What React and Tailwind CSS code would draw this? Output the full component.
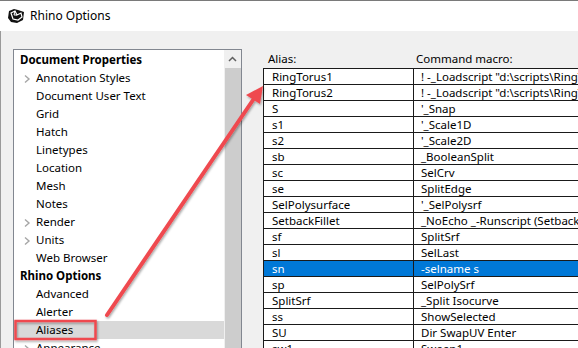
import React from "react";

const tree = [
  { label: "Document Properties", bold: true },
  { label: "Annotation Styles", arrow: true },
  { label: "Document User Text" },
  { label: "Grid" },
  { label: "Hatch" },
  { label: "Linetypes" },
  { label: "Location" },
  { label: "Mesh" },
  { label: "Notes" },
  { label: "Render", arrow: true },
  { label: "Units", arrow: true },
  { label: "Web Browser" },
  { label: "Rhino Options", bold: true },
  { label: "Advanced" },
  { label: "Alerter" },
  { label: "Aliases", active: true },
  { label: "Appearance", arrow: true },
];

const aliases = [
  ["RingTorus1", '! -_Loadscript "d:\\scripts\\RingTorus1.rvb"'],
  ["RingTorus2", '! -_Loadscript "d:\\scripts\\RingTorus2.rvb"'],
  ["S", "'_Snap"],
  ["s1", "'_Scale1D"],
  ["s2", "'_Scale2D"],
  ["sb", "_BooleanSplit"],
  ["sc", "SelCrv"],
  ["se", "SplitEdge"],
  ["SelPolysurface", "'_SelPolysrf"],
  ["SetbackFillet", "_NoEcho _-Runscript (SetbackFillet)"],
  ["sf", "SplitSrf"],
  ["sl", "SelLast"],
  ["sn", "-selname s", true],
  ["sp", "SelPolySrf"],
  ["SplitSrf", "_Split Isocurve"],
  ["ss", "ShowSelected"],
  ["SU", "Dir SwapUV Enter"],
  ["sw1", "Sweep1"],
];

function RhinoIcon() {
  return (
    <svg width="17" height="16" viewBox="0 0 17 16">
      <path d="M1 3 L6 1 L10 2 L16 4 L15 12 L9 15 L3 14 L0 10 Z" fill="#111" />
      <path d="M3 5 L7 3 L9 7 L13 5 L14 9 L10 12 L5 11 Z" fill="none" stroke="#fff" strokeWidth="1.2" />
      <path d="M7 3 L6 7 L9 7" fill="none" stroke="#fff" strokeWidth="1" />
    </svg>
  );
}

function Chevron() {
  return (
    <svg width="8" height="10" viewBox="0 0 8 10" className="absolute left-[9px] top-[5px]">
      <path d="M2 1.5 L6 5 L2 8.5" fill="none" stroke="#a6a6a6" strokeWidth="1.4" />
    </svg>
  );
}

export default function App() {
  return (
    <div
      className="relative w-[578px] h-[348px] overflow-hidden bg-[#f0f0f0] border-t border-[#7a7a7a] text-[11.5px] text-black"
      style={{ fontFamily: '"Segoe UI", "Noto Sans", sans-serif' }}
    >
      {/* title bar */}
      <div className="h-[30px] bg-white flex items-center pl-[8px]">
        <RhinoIcon />
        <span className="ml-[5px] text-[12px]">Rhino Options</span>
      </div>

      <div className="flex pt-[18px] h-full border-l border-[#9a9a9a]">
        {/* tree panel */}
        <div className="ml-[12px] w-[229px] h-[320px] shrink-0 bg-white border border-[#828790] flex">
          <div className="flex-1 pt-[1px]">
            {tree.map((t) => (
              <div
                key={t.label}
                className={
                  "relative h-[18px] leading-[18px] " +
                  (t.bold ? "pl-[6px] font-bold " : "pl-[22px] ") +
                  (t.active ? "bg-[#d9d9d9]" : "")
                }
              >
                {t.arrow && <Chevron />}
                {t.label}
              </div>
            ))}
          </div>
          <div className="w-[17px] bg-[#f0f0f0] flex flex-col items-center">
            <div className="h-[18px] flex items-center justify-center">
              <svg width="9" height="6" viewBox="0 0 9 6">
                <path d="M1 5 L4.5 1.5 L8 5" fill="none" stroke="#606060" strokeWidth="1.5" />
              </svg>
            </div>
            <div className="w-[16px] flex-1 bg-[#cdcdcd]" />
          </div>
        </div>

        {/* aliases */}
        <div className="ml-[21px] flex-1 min-w-0">
          <div className="flex h-[19px] items-center">
            <div className="w-[153px] pl-[5px]">Alias:</div>
            <div>Command macro:</div>
          </div>
          <div className="w-[400px] border-t border-l border-[#1a1a1a] bg-white">
            {aliases.map(([a, m, sel]) => (
              <div
                key={a}
                className={
                  "flex h-[16px] leading-[15px] border-b border-[#1a1a1a] whitespace-nowrap " +
                  (sel ? "bg-[#0078d7] text-white" : "")
                }
              >
                <div className="w-[150px] shrink-0 pl-[8px] border-r border-[#1a1a1a]">{a}</div>
                <div className="pl-[7px]">{m}</div>
              </div>
            ))}
          </div>
        </div>
      </div>

      {/* annotation overlay */}
      <svg className="absolute left-0 top-0 pointer-events-none" width="578" height="348" viewBox="0 0 578 348">
        <defs>
          <filter id="sh" x="-20%" y="-20%" width="140%" height="140%">
            <feDropShadow dx="1" dy="1.5" stdDeviation="1.2" floodColor="#000" floodOpacity="0.35" />
          </filter>
        </defs>
        <g filter="url(#sh)">
          <rect x="15.5" y="320" width="80" height="18" fill="none" stroke="#ef4a4f" strokeWidth="2.5" />
          <line x1="107" y1="314" x2="253" y2="99" stroke="#ef4a4f" strokeWidth="4" strokeLinecap="round" />
          <polygon points="263,85 260,103 246,94" fill="#ef4a4f" />
        </g>
      </svg>
    </div>
  );
}
